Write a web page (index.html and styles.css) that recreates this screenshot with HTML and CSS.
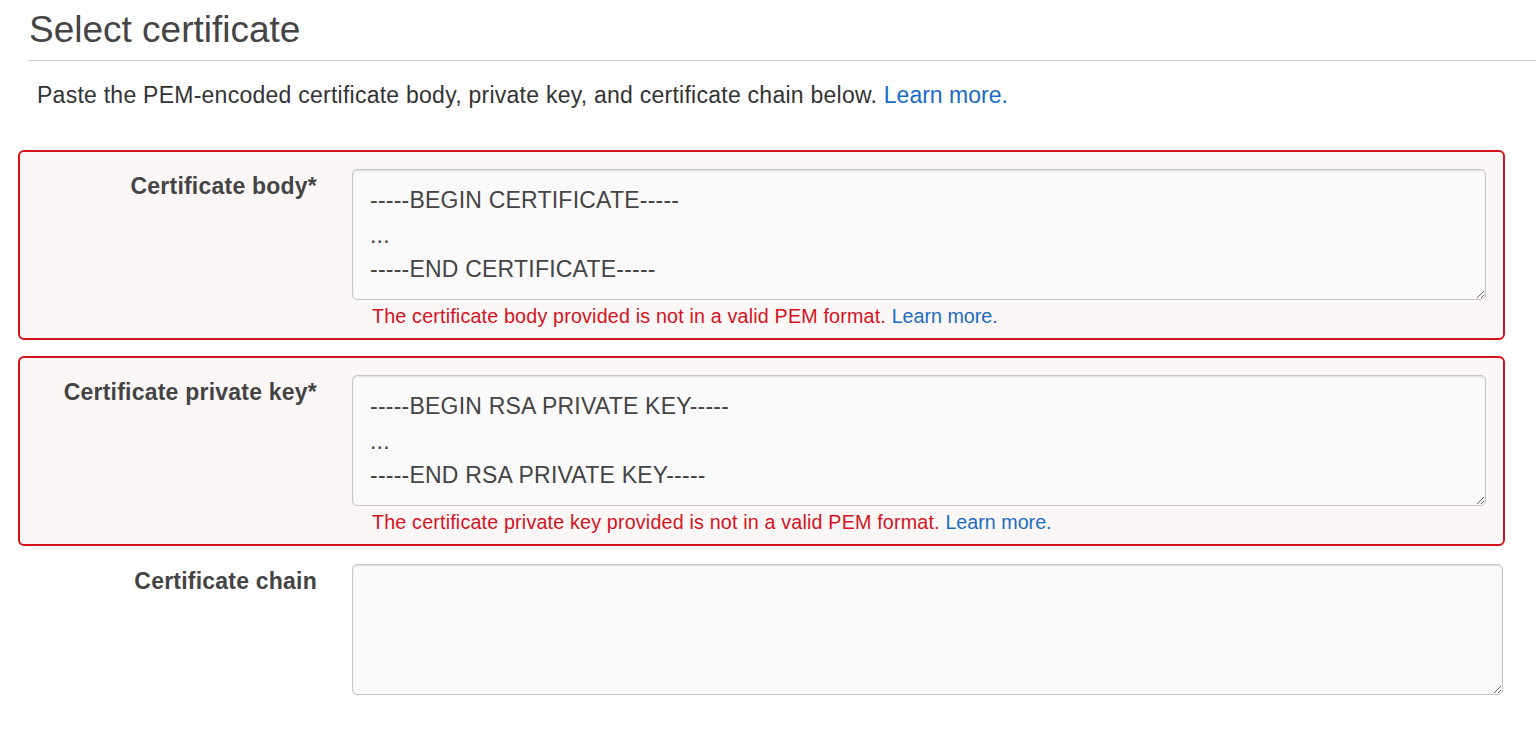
FILE: index.html
```html
<!DOCTYPE html>
<html lang="en">
<head>
<meta charset="utf-8">
<title>Select certificate</title>
<link rel="stylesheet" href="styles.css">
</head>
<body>
<div class="page">
  <h1 class="title">Select certificate</h1>
  <p class="intro">Paste the PEM-encoded certificate body, private key, and certificate chain below. <a href="#" class="link">Learn more.</a></p>

  <div class="form">
    <div class="row row-error">
      <label class="label">Certificate body*</label>
      <div class="control">
        <textarea class="field" rows="3">-----BEGIN CERTIFICATE-----
...
-----END CERTIFICATE-----</textarea>
        <div class="error">The certificate body provided is not in a valid PEM format. <a href="#" class="link">Learn more.</a></div>
      </div>
    </div>

    <div class="row row-error">
      <label class="label">Certificate private key*</label>
      <div class="control">
        <textarea class="field" rows="3">-----BEGIN RSA PRIVATE KEY-----
...
-----END RSA PRIVATE KEY-----</textarea>
        <div class="error">The certificate private key provided is not in a valid PEM format. <a href="#" class="link">Learn more.</a></div>
      </div>
    </div>

    <div class="row row-plain">
      <label class="label">Certificate chain</label>
      <div class="control">
        <textarea class="field" rows="3"></textarea>
      </div>
    </div>
  </div>
</div>
</body>
</html>
```

FILE: styles.css
```css
html, body {
  margin: 0;
  padding: 0;
  background: #ffffff;
}

body {
  font-family: "Liberation Sans", Arial, sans-serif;
  color: #444;
  overflow: hidden;
}

.page {
  padding: 0 0 0 18px;
}

.title {
  margin: 0 0 0 10px;
  padding: 12px 0 12px 1px;
  font-size: 37px;
  font-weight: normal;
  line-height: 36px;
  color: #444;
  border-bottom: 1px solid #cccccc;
}

.intro {
  margin: 16px 0 0 19px;
  font-size: 23px;
  line-height: 36px;
  letter-spacing: 0.25px;
  color: #333;
}

.intro .link {
  letter-spacing: 0;
}

.link {
  color: #1a6bbf;
  text-decoration: none;
}

.form {
  width: 1487px;
  margin-top: 37px;
  display: flex;
  flex-direction: column;
  gap: 16px;
}

.row {
  display: grid;
  grid-template-columns: 297px 1fr;
  column-gap: 35px;
  border: 2px solid transparent;
  border-radius: 6px;
  padding: 17px 0 6px 0;
}

.row-error {
  border-color: #d5121c;
  background: #fcf7f7;
  padding-right: 17px;
}

.row-plain {
  padding-top: 0;
}

.label {
  text-align: right;
  font-weight: bold;
  font-size: 23px;
  line-height: 34px;
  letter-spacing: 0.22px;
  color: #444;
}

.control {
  display: flex;
  flex-direction: column;
}

.field {
  display: block;
  width: 100%;
  box-sizing: border-box;
  height: 131px;
  padding: 13px 17px 11px;
  margin: 0;
  font-family: "Liberation Sans", Arial, sans-serif;
  font-size: 23px;
  line-height: 34.5px;
  letter-spacing: 0.22px;
  color: #444;
  background: #fafafa;
  border: 1px solid #c6c6c6;
  border-radius: 5px;
  box-shadow: inset 0 1px 2px rgba(0, 0, 0, 0.12);
  resize: vertical;
  overflow: hidden;
}

.error {
  margin: 0 0 0 20px;
  font-size: 19.7px;
  line-height: 32px;
  letter-spacing: 0.18px;
  color: #d5121c;
}

.error .link {
  letter-spacing: 0;
}
```
